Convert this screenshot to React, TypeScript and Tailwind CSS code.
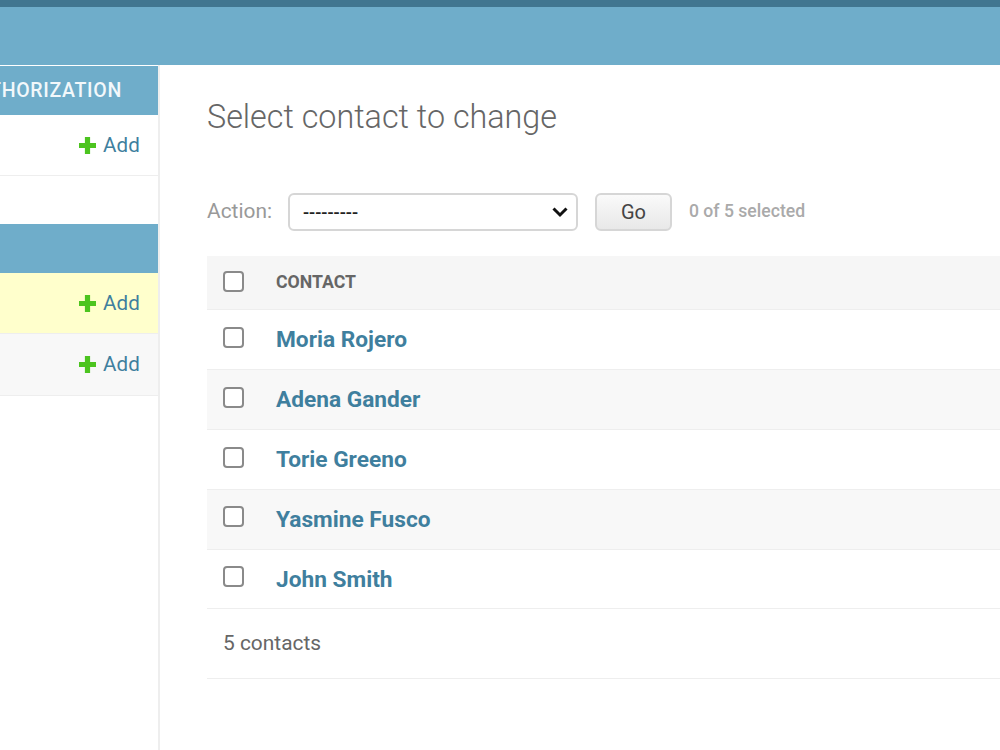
const font = { fontFamily: "Roboto, sans-serif" };

function Plus() {
  return (
    <svg width="17" height="17" viewBox="0.8 0.8 14.4 14.4" className="shrink-0">
      <path d="M5.800 .8h4.400v5h5v4.400h-5v5H5.800v-5h-5V5.800h5z" fill="#4cc41f" />
    </svg>
  );
}

function AddRow({ bg, h }: { bg: string; h: string }) {
  return (
    <div className={`flex items-center justify-end gap-[7px] pr-[18px] border-b border-[#eeeeee] ${bg} ${h}`}>
      <Plus />
      <span className="text-[20.6px] leading-none text-[#3f7f9e] tracking-[0.1px]">Add</span>
    </div>
  );
}

const names = ["Moria Rojero", "Adena Gander", "Torie Greeno", "Yasmine Fusco", "John Smith"];

function Box() {
  return <span className="block w-[21px] h-[21px] rounded-[4px] border-2 border-[#8a8a8a] bg-white" />;
}

export default function App() {
  return (
    <div style={font} className="w-[1000px] h-[750px] overflow-hidden bg-white flex flex-col">
      <div className="h-[7px] bg-[#417690]" />
      <div className="h-[58px] bg-[#6fadca]" />
      <div className="flex flex-1 min-h-0">
        <aside className="w-[160px] shrink-0 border-r-2 border-[#eeeeee] pt-[1px]">
          <div className="h-[49px] bg-[#6fadca] flex items-center justify-end overflow-hidden pr-[36px]">
            <span className="text-[19.5px] font-medium tracking-[0.7px] text-[#f2f8fb] whitespace-nowrap">THORIZATION</span>
          </div>
          <AddRow bg="bg-white" h="h-[61px]" />
          <div className="h-[48px]" />
          <div className="h-[49px] bg-[#6fadca]" />
          <AddRow bg="bg-[#ffffcc]" h="h-[61px]" />
          <AddRow bg="bg-[#f8f8f8]" h="h-[62px]" />
        </aside>
        <main className="flex-1 min-w-0 pl-[47px]">
          <h1 className="mt-[32px] h-[40px] text-[32.3px] leading-[40px] font-light text-[#666666]">Select contact to change</h1>
          <div className="mt-[56px] h-[38px] flex items-center">
            <span className="text-[20.9px] text-[#999999] w-[81px]">Action:</span>
            <div className="w-[290px] h-[38px] rounded-[6px] border-2 border-[#d6d6d6] bg-white flex items-center justify-between pl-[13px] pr-[7px]">
              <span className="text-[18px] text-[#222222] font-medium">---------</span>
              <svg width="18" height="12" viewBox="0 0 18 12" fill="none"><path d="M2.500 2.500 9 9l6.500-6.500" stroke="#111" strokeWidth="3" /></svg>
            </div>
            <div className="ml-[17px] w-[77px] h-[38px] rounded-[6px] border-2 border-[#d6d6d6] bg-gradient-to-b from-[#fafafa] to-[#e8e8e8] flex items-center justify-center text-[20px] text-[#444444]">Go</div>
            <span className="ml-[17px] text-[17.6px] text-[#aaaaaa] font-medium -mt-[2px]">0 of 5 selected</span>
          </div>
          <div className="mt-[25px] h-[54px] bg-[#f6f6f6] border-b border-[#eeeeee] flex items-center">
            <div className="pl-[16px] w-[69px] -mt-[3px]"><Box /></div>
            <span className="text-[17.7px] font-bold text-[#666666]">CONTACT</span>
          </div>
          {names.map((n, i) => (
            <div key={n} className={`border-b border-[#eeeeee] flex ${i === 4 ? "h-[59px]" : "h-[60px]"} ${i % 2 ? "bg-[#f8f8f8]" : "bg-white"}`}>
              <div className={`pl-[16px] w-[69px] ${i > 2 ? "pt-[16px]" : "pt-[17px]"}`}><Box /></div>
              <span className="text-[22.7px] font-bold text-[#3f7f9e] leading-[60px]">{n}</span>
            </div>
          ))}
          <div className="h-[70px] border-b border-[#eeeeee] flex items-center pl-[16px] text-[20.9px] text-[#666666]">5 contacts</div>
        </main>
      </div>
    </div>
  );
}
